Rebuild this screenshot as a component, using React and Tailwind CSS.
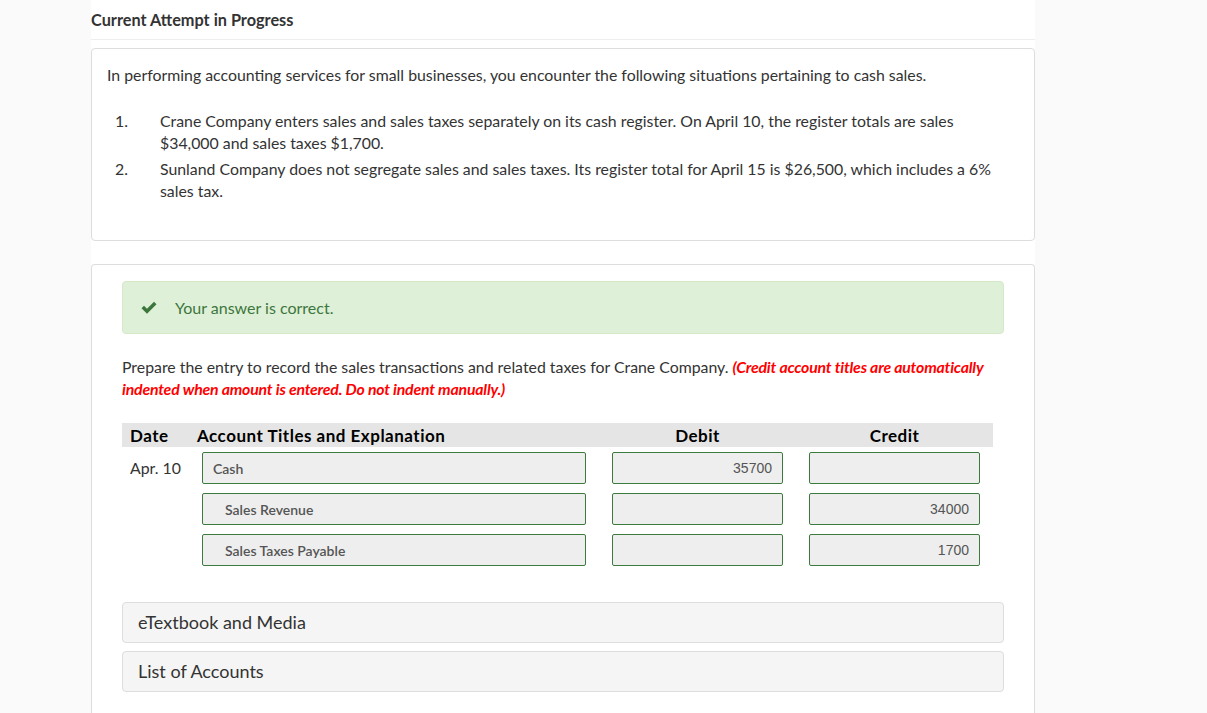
import React from "react";

const rows = [
  { account: "Cash", indent: false, debit: "35700", credit: "" },
  { account: "Sales Revenue", indent: true, debit: "", credit: "34000" },
  { account: "Sales Taxes Payable", indent: true, debit: "", credit: "1700" },
];

function Check() {
  return (
    <svg width="18" height="15" viewBox="0 0 18 15" className="shrink-0">
      <path d="M1.5 8.2 L4 5.8 L7 8.8 L14 1.8 L16.5 4.3 L7 13.8 Z" fill="#3c763d" />
    </svg>
  );
}

export default function App() {
  return (
    <div className="min-h-screen bg-[#fafafa] font-['Lato','Noto_Sans',sans-serif] text-[#333]">
      <div className="ml-[91px] w-[944px] bg-white min-h-screen">
        <div className="h-[40px] pt-[2px] flex items-center border-b border-[#eeeeee] text-[16.3px] font-bold text-[#333]">
          Current Attempt in Progress
        </div>

        {/* problem statement */}
        <div className="mt-[8px] border border-[#dddddd] rounded-[4px] pt-[15px] pb-[38px] pl-[15px] pr-[15px] text-[15.85px] leading-[22px]">
          <p>
            In performing accounting services for small businesses, you encounter the following situations pertaining to cash sales.
          </p>
          <ol className="mt-[24px] flex flex-col gap-[4px]">
            <li className="flex">
              <span className="w-[53px] pl-[8px] shrink-0">1.</span>
              <span className="pr-[60px]">
                Crane Company enters sales and sales taxes separately on its cash register. On April 10, the register totals are sales $34,000 and sales taxes $1,700.
              </span>
            </li>
            <li className="flex">
              <span className="w-[53px] pl-[8px] shrink-0">2.</span>
              <span className="pr-[8px]">
                Sunland Company does not segregate sales and sales taxes. Its register total for April 15 is $26,500, which includes a 6% sales tax.
              </span>
            </li>
          </ol>
        </div>

        {/* answer area */}
        <div className="mt-[23px] border border-[#dddddd] border-b-0 rounded-t-[4px] pt-[16px] px-[30px] pb-[30px]">
          <div className="h-[53px] bg-[#dff0d8] border border-[#d6e9c6] rounded-[4px] flex items-center pl-[17px] gap-[17px] text-[16px] text-[#3c763d]">
            <Check />
            <span>Your answer is correct.</span>
          </div>

          <p className="mt-[22px] text-[15.85px] leading-[22px] pr-[10px]">
            Prepare the entry to record the sales transactions and related taxes for Crane Company.{" "}
            <span className="text-[#ff0000] font-bold italic tracking-[-0.2px]">
              (Credit account titles are automatically indented when amount is entered. Do not indent manually.)
            </span>
          </p>

          <div className="mt-[23px] w-[871px]">
            <div className="grid grid-cols-[75px_402px_197px_197px] h-[24px] items-center bg-[#e5e5e5] text-[17px] tracking-[0.5px] font-bold text-black">
              <div className="pl-[8px]">Date</div>
              <div>Account Titles and Explanation</div>
              <div className="text-center">Debit</div>
              <div className="text-center">Credit</div>
            </div>
            <div className="mt-[5px] flex flex-col gap-[9px]">
              {rows.map((r, i) => (
                <div key={i} className="grid grid-cols-[75px_402px_197px_197px] items-center">
                  <div className="pl-[8px] text-[15.85px]">{i === 0 ? "Apr. 10" : ""}</div>
                  <div className="pl-[5px] pr-[13px]">
                    <div
                      className={`h-[32px] bg-[#eeeeee] border border-[#3d7a3d] rounded-[2px] flex items-center text-[14px] font-semibold text-[#555] ${
                        r.indent ? "pl-[22px]" : "pl-[10px]"
                      }`}
                    >
                      {r.account}
                    </div>
                  </div>
                  <div className="px-[13px]">
                    <div className="h-[32px] bg-[#eeeeee] border border-[#3d7a3d] rounded-[2px] flex items-center justify-end pr-[10px] text-[14px] text-[#555] font-['Liberation_Sans',Arial,sans-serif]">
                      {r.debit}
                    </div>
                  </div>
                  <div className="px-[13px]">
                    <div className="h-[32px] bg-[#eeeeee] border border-[#3d7a3d] rounded-[2px] flex items-center justify-end pr-[10px] text-[14px] text-[#555] font-['Liberation_Sans',Arial,sans-serif]">
                      {r.credit}
                    </div>
                  </div>
                </div>
              ))}
            </div>
          </div>

          <div className="mt-[36px] flex flex-col gap-[8px]">
            <div className="h-[41px] bg-[#f5f5f5] border border-[#dddddd] rounded-[4px] flex items-center pl-[15px] text-[18px] text-[#333]">
              eTextbook and Media
            </div>
            <div className="h-[41px] bg-[#f5f5f5] border border-[#dddddd] rounded-[4px] flex items-center pl-[15px] text-[18px] text-[#333]">
              List of Accounts
            </div>
          </div>
        </div>
      </div>
    </div>
  );
}
